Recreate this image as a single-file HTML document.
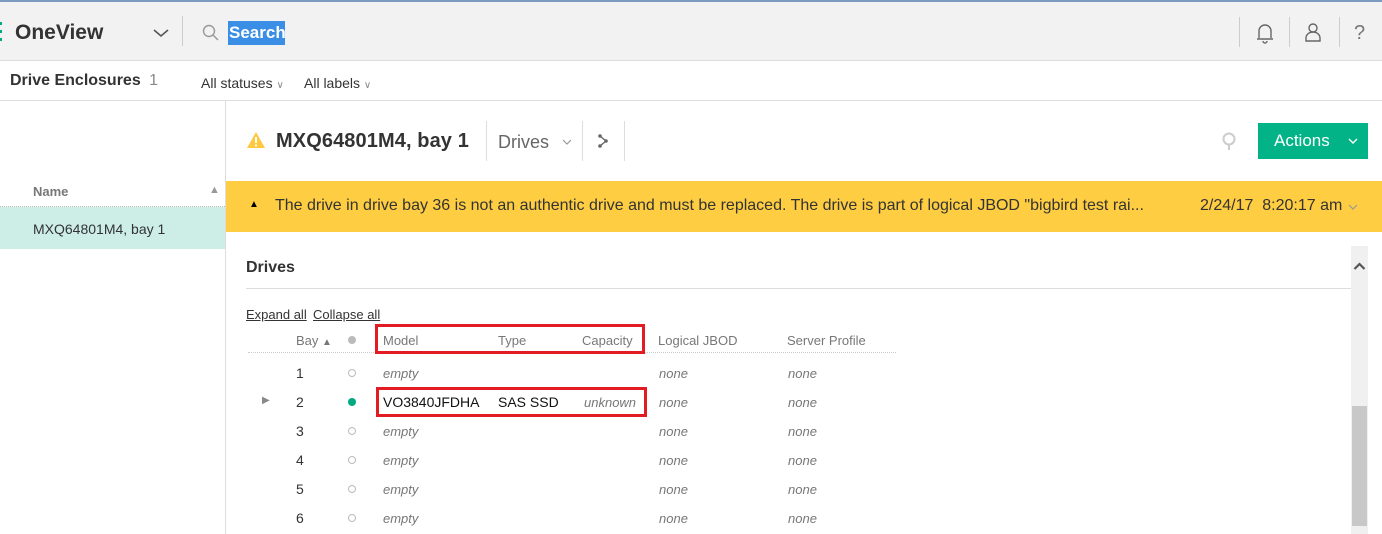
<!DOCTYPE html>
<html><head><meta charset="utf-8"><style>
*{margin:0;padding:0;box-sizing:border-box}
body{width:1382px;height:534px;overflow:hidden;background:#fff;font-family:"Liberation Sans",sans-serif;color:#333;position:relative}
.a{position:absolute;white-space:nowrap}
.g{color:#777}
.i{font-style:italic;color:#777;font-size:13px}
.r{font-size:14px}
</style></head><body>
<div class="a" style="left:0;top:0;width:1382px;height:2px;background:#7b9cc0"></div>
<div class="a" style="left:0;top:2px;width:1382px;height:59px;background:#f2f2f2;border-bottom:1px solid #ddd"></div>
<div class="a" style="left:0;top:22px;width:2px;height:3px;background:#01a982"></div>
<div class="a" style="left:0;top:30px;width:2px;height:3px;background:#01a982"></div>
<div class="a" style="left:0;top:38px;width:2px;height:3px;background:#01a982"></div>
<div class="a" style="left:15px;top:21px;font-size:21px;font-weight:bold;color:#333">OneView</div>
<svg class="a" style="left:153px;top:28px" width="16" height="10"><path d="M1 2 L8 8 L15 2" stroke="#555" stroke-width="1.6" fill="none"/></svg>
<div class="a" style="left:182px;top:16px;width:1px;height:30px;background:#ccc"></div>
<svg class="a" style="left:202px;top:24px" width="18" height="18"><circle cx="7" cy="7" r="5.5" stroke="#999" stroke-width="1.4" fill="none"/><path d="M11 11 L16 16" stroke="#999" stroke-width="1.5"/></svg>
<div class="a" style="left:228px;top:21px;height:24px;width:57px;background:#3a8ee6;color:#fff;font-size:17px;font-weight:bold;line-height:24px;padding:0 1px">Search</div>
<div class="a" style="left:1239px;top:17px;width:1px;height:30px;background:#ccc"></div>
<div class="a" style="left:1289px;top:17px;width:1px;height:30px;background:#ccc"></div>
<div class="a" style="left:1339px;top:17px;width:1px;height:30px;background:#ccc"></div>
<svg class="a" style="left:1255px;top:22px" width="20" height="22"><path d="M4 16 V9 a6 6 0 0 1 12 0 V16 M2 17 H18 M8 19 a2 2 0 0 0 4 0" stroke="#666" stroke-width="1.4" fill="none"/></svg>
<svg class="a" style="left:1304px;top:22px" width="18" height="22"><circle cx="9" cy="6" r="4" stroke="#666" stroke-width="1.4" fill="none"/><path d="M2 19 V16 a7 6 0 0 1 14 0 V19 Z" stroke="#666" stroke-width="1.4" fill="none"/></svg>
<div class="a" style="left:1354px;top:22px;font-size:20px;color:#777">?</div>

<div class="a" style="left:10px;top:72px;font-size:16px;font-weight:bold">Drive Enclosures <span style="font-weight:normal;color:#888;margin-left:4px">1</span></div>
<div class="a r" style="left:201px;top:75px">All statuses <span style="color:#888;font-size:10px">&#8744;</span></div>
<div class="a r" style="left:304px;top:75px">All labels <span style="color:#888;font-size:10px">&#8744;</span></div>
<div class="a" style="left:0;top:100px;width:1382px;height:1px;background:#ddd"></div>
<div class="a" style="left:225px;top:101px;width:1px;height:433px;background:#ddd"></div>

<div class="a" style="left:33px;top:184px;font-size:13px;font-weight:bold;color:#777">Name</div>
<div class="a" style="left:209px;top:184px;font-size:11px;color:#999">&#9650;</div>
<div class="a" style="left:0;top:206px;width:225px;border-top:1px dotted #bbb"></div>
<div class="a" style="left:0;top:207px;width:225px;height:42px;background:#cceee6"></div>
<div class="a" style="left:33px;top:221px;font-size:14px">MXQ64801M4, bay 1</div>

<svg class="a" style="left:246px;top:131px" width="20" height="18"><path d="M10 1 L19 17 H1 Z" fill="#fec93f"/><rect x="9" y="6" width="2" height="6" fill="#fff"/><rect x="9" y="13.5" width="2" height="2" fill="#fff"/></svg>
<div class="a" style="left:276px;top:130px;font-size:20px;font-weight:bold;letter-spacing:0.1px">MXQ64801M4, bay 1</div>
<div class="a" style="left:486px;top:121px;width:1px;height:40px;background:#ddd"></div>
<div class="a" style="left:498px;top:132px;font-size:18px;color:#666">Drives</div>
<svg class="a" style="left:562px;top:139px" width="10" height="7"><path d="M1 1 L5 5 L9 1" stroke="#999" stroke-width="1.2" fill="none"/></svg>
<div class="a" style="left:582px;top:121px;width:1px;height:40px;background:#ddd"></div>
<svg class="a" style="left:597px;top:133px" width="12" height="16"><circle cx="3" cy="3" r="1.8" fill="#666"/><circle cx="9" cy="8" r="1.8" fill="#666"/><circle cx="3" cy="13" r="1.8" fill="#666"/><path d="M3 3 L9 8 L3 13" stroke="#666" stroke-width="1.4" fill="none"/></svg>
<div class="a" style="left:624px;top:121px;width:1px;height:40px;background:#ddd"></div>
<svg class="a" style="left:1221px;top:132px" width="16" height="20"><circle cx="8" cy="7" r="5.5" stroke="#ccc" stroke-width="2" fill="none"/><path d="M8 12 V18" stroke="#ccc" stroke-width="2"/></svg>
<div class="a" style="left:1258px;top:123px;width:110px;height:36px;background:#01b386"></div>
<div class="a" style="left:1274px;top:131px;font-size:17px;color:#fff">Actions</div>
<svg class="a" style="left:1347px;top:137px" width="12" height="8"><path d="M2 2 L6 6 L10 2" stroke="#fff" stroke-width="1.4" fill="none"/></svg>

<div class="a" style="left:226px;top:181px;width:1156px;height:51px;background:#fecd41"></div>
<div class="a" style="left:249px;top:199px;font-size:10px;color:#000">&#9650;</div>
<div class="a" style="left:275px;top:197px;font-size:16px;color:#333">The drive in drive bay 36 is not an authentic drive and must be replaced. The drive is part of logical JBOD "bigbird test rai...</div>
<div class="a" style="left:1200px;top:197px;font-size:16px;color:#333">2/24/17&nbsp;&nbsp;8:20:17 am</div>
<svg class="a" style="left:1347px;top:203px" width="12" height="8"><path d="M2 2 L6 6 L10 2" stroke="#999" stroke-width="1.2" fill="none"/></svg>

<div class="a" style="left:246px;top:259px;font-size:16px;font-weight:bold">Drives</div>
<div class="a" style="left:246px;top:288px;width:1105px;height:1px;background:#ddd"></div>
<div class="a" style="left:1351px;top:246px;width:17px;height:288px;background:#f0f0f0"></div>
<div class="a" style="left:1352px;top:406px;width:15px;height:120px;background:#c8c8c8"></div>
<svg class="a" style="left:1353px;top:262px" width="13" height="9"><path d="M1.5 7 L6.5 2 L11.5 7" stroke="#555" stroke-width="2.2" fill="none"/></svg>

<div class="a" style="left:246px;top:307px;font-size:13px;text-decoration:underline">Expand all</div>
<div class="a" style="left:313px;top:307px;font-size:13px;text-decoration:underline">Collapse all</div>
<div class="a" style="left:248px;top:352px;width:648px;border-top:1px dotted #ccc"></div>
<div class="a g" style="left:296px;top:333px;font-size:13px">Bay <span style="font-size:10px">&#9650;</span></div>
<div class="a" style="left:348px;top:336px;width:8px;height:8px;border-radius:50%;background:#bbb"></div>
<div class="a g" style="left:383px;top:333px;font-size:13px">Model</div>
<div class="a g" style="left:498px;top:333px;font-size:13px">Type</div>
<div class="a g" style="left:582px;top:333px;font-size:13px">Capacity</div>
<div class="a g" style="left:658px;top:333px;font-size:13px">Logical JBOD</div>
<div class="a g" style="left:787px;top:333px;font-size:13px">Server Profile</div>
<div class="a" style="left:375px;top:324px;width:270px;height:30px;border:3px solid #e31b23"></div>

<div class="a r" style="left:296px;top:365px">1</div><div class="a" style="left:348px;top:369px;width:8px;height:8px;border-radius:50%;border:1px solid #bbb"></div><div class="a i" style="left:383px;top:366px">empty</div><div class="a i" style="left:659px;top:366px">none</div><div class="a i" style="left:788px;top:366px">none</div>
<div class="a" style="left:262px;top:395px;font-size:10px;color:#888">&#9654;</div>
<div class="a r" style="left:296px;top:394px">2</div><div class="a" style="left:348px;top:398px;width:8px;height:8px;border-radius:50%;background:#01a982"></div><div class="a r" style="left:383px;top:394px;color:#111">VO3840JFDHA</div><div class="a r" style="left:498px;top:394px;color:#111">SAS SSD</div><div class="a i" style="left:584px;top:395px">unknown</div><div class="a i" style="left:659px;top:395px">none</div><div class="a i" style="left:788px;top:395px">none</div>
<div class="a" style="left:376px;top:387px;width:271px;height:30px;border:3px solid #e31b23"></div>
<div class="a r" style="left:296px;top:423px">3</div><div class="a" style="left:348px;top:427px;width:8px;height:8px;border-radius:50%;border:1px solid #bbb"></div><div class="a i" style="left:383px;top:424px">empty</div><div class="a i" style="left:659px;top:424px">none</div><div class="a i" style="left:788px;top:424px">none</div>
<div class="a r" style="left:296px;top:452px">4</div><div class="a" style="left:348px;top:456px;width:8px;height:8px;border-radius:50%;border:1px solid #bbb"></div><div class="a i" style="left:383px;top:453px">empty</div><div class="a i" style="left:659px;top:453px">none</div><div class="a i" style="left:788px;top:453px">none</div>
<div class="a r" style="left:296px;top:481px">5</div><div class="a" style="left:348px;top:485px;width:8px;height:8px;border-radius:50%;border:1px solid #bbb"></div><div class="a i" style="left:383px;top:482px">empty</div><div class="a i" style="left:659px;top:482px">none</div><div class="a i" style="left:788px;top:482px">none</div>
<div class="a r" style="left:296px;top:510px">6</div><div class="a" style="left:348px;top:514px;width:8px;height:8px;border-radius:50%;border:1px solid #bbb"></div><div class="a i" style="left:383px;top:511px">empty</div><div class="a i" style="left:659px;top:511px">none</div><div class="a i" style="left:788px;top:511px">none</div>
</body></html>
